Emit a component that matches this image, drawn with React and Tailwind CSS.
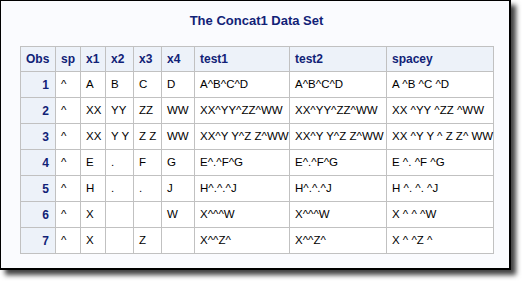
import React from "react";

const cols = [
  { key: "sp", w: "w-[25px]" },
  { key: "x1", w: "w-[25px]" },
  { key: "x2", w: "w-[28px]" },
  { key: "x3", w: "w-[28px]" },
  { key: "x4", w: "w-[33px]" },
  { key: "test1", w: "w-[95px]" },
  { key: "test2", w: "w-[97px]" },
  { key: "spacey", w: "w-[107px]" },
];

const rows = [
  ["^", "A", "B", "C", "D", "A^B^C^D", "A^B^C^D", "A ^B ^C ^D"],
  ["^", "XX", "YY", "ZZ", "WW", "XX^YY^ZZ^WW", "XX^YY^ZZ^WW", "XX ^YY ^ZZ ^WW"],
  ["^", "XX", "Y Y", "Z Z", "WW", "XX^Y Y^Z Z^WW", "XX^Y Y^Z Z^WW", "XX ^Y Y ^ Z Z^ WW"],
  ["^", "E", ".", "F", "G", "E^.^F^G", "E^.^F^G", "E ^. ^F ^G"],
  ["^", "H", ".", ".", "J", "H^.^.^J", "H^.^.^J", "H ^. ^. ^J"],
  ["^", "X", "", "", "W", "X^^^W", "X^^^W", "X ^ ^ ^W"],
  ["^", "X", "", "Z", "", "X^^Z^", "X^^Z^", "X ^ ^Z ^"],
];

export default function App() {
  return (
    <div className="w-[522px] h-[281px] bg-white font-['Liberation_Sans',Arial,sans-serif]">
      {/* 報表框 */}
      <div className="w-[511px] h-[270px] bg-[#fafbfe] border-l border-t border-r-2 border-b-2 border-black shadow-[5px_5px_5px_rgba(0,0,0,0.75)] flex flex-col">
        <div className="h-[45px] pt-[12px] pl-[3px] text-center text-[13px] font-bold text-[#112277] leading-[16px]">
          The Concat1 Data Set
        </div>
        <table className="ml-[19px] border-collapse table-fixed w-[474px]">
          <thead>
            <tr>
              <th className="w-[35px] h-[25px] border border-[#c1c1c1] bg-[#edf2f9] text-[#112277] text-[12px] font-bold text-left pl-[5px] align-middle">
                Obs
              </th>
              {cols.map((c) => (
                <th
                  key={c.key}
                  className={`${c.w} h-[25px] border border-[#c1c1c1] bg-[#edf2f9] text-[#112277] text-[12px] font-bold text-left pl-[5px] align-middle`}
                >
                  {c.key}
                </th>
              ))}
            </tr>
          </thead>
          <tbody>
            {rows.map((r, i) => (
              <tr key={i}>
                <td className="h-[26px] border border-[#c1c1c1] bg-[#edf2f9] text-[#112277] text-[12px] font-bold text-right pr-[6px] align-middle">
                  {i + 1}
                </td>
                {r.map((v, j) => (
                  <td
                    key={j}
                    className="h-[26px] border border-[#c1c1c1] bg-white text-black text-[11.5px] text-left pl-[5px] align-middle whitespace-pre"
                  >
                    {v}
                  </td>
                ))}
              </tr>
            ))}
          </tbody>
        </table>
      </div>
    </div>
  );
}
